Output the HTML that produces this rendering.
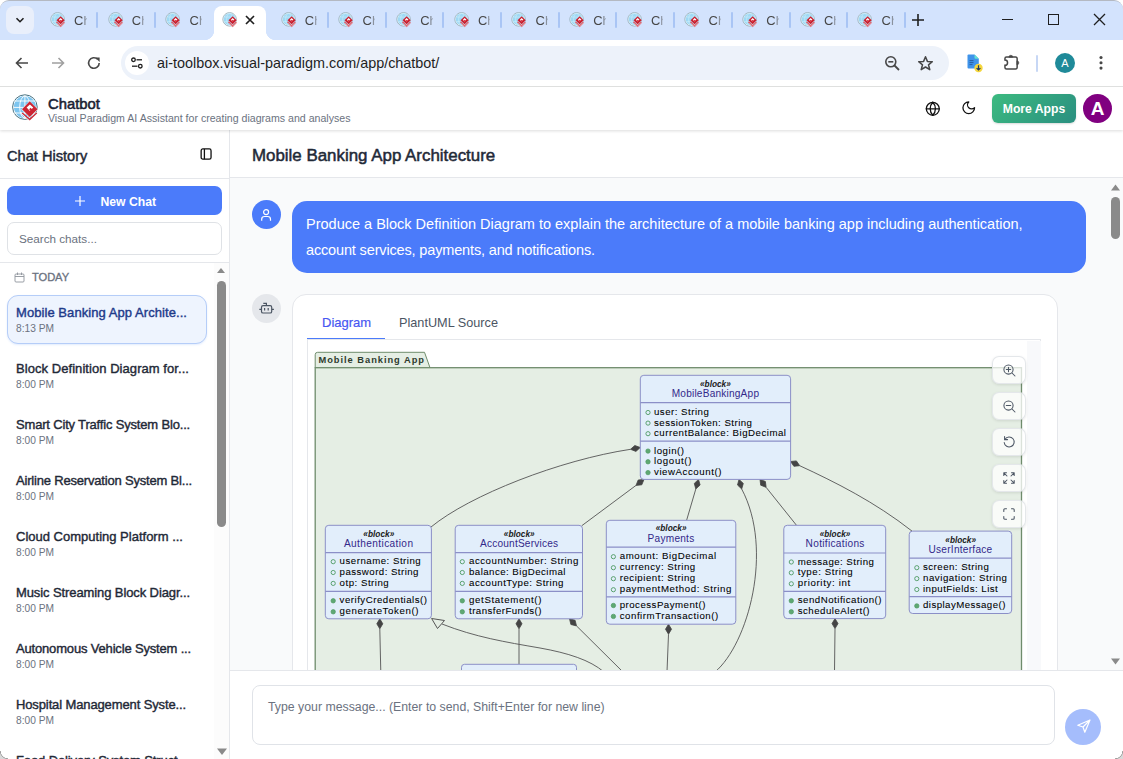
<!DOCTYPE html>
<html><head><meta charset="utf-8">
<style>
*{box-sizing:border-box;margin:0;padding:0}
html,body{width:1123px;height:759px;overflow:hidden;background:#fff;font-family:"Liberation Sans",sans-serif;position:relative}
.a{position:absolute}
#tabs{left:0;top:0;width:1123px;height:41px;background:#d3e3fd;border-top:1px solid #b4b9c2;border-radius:9px 9px 0 0}
.fav{position:absolute;top:12px;width:16px;height:16px}
.ch{position:absolute;top:14px;font-size:13px;line-height:14px;color:#474747;width:12.5px;overflow:hidden;white-space:nowrap;-webkit-mask-image:linear-gradient(90deg,#000 60%,rgba(0,0,0,.3) 100%)}
.sep{position:absolute;top:12px;width:2px;height:16px;background:#a9c5f5;border-radius:1px}
#toolbar{left:0;top:40px;width:1123px;height:47px;background:#fff;border-bottom:1px solid #dfe0df}
#omni{left:121px;top:46px;width:828px;height:34px;border-radius:17px;background:#edf2fa}
#header{left:0;top:87px;width:1123px;height:43px;background:#fff;box-shadow:0 1px 3px rgba(0,0,0,.14);clip-path:inset(0 0 -10px 0);z-index:5}
#sidebar{left:0;top:130px;width:230px;height:629px;background:#fff;border-right:1px solid #e5e7eb}
#main{left:230px;top:130px;width:893px;height:629px;background:#f9fafb}
</style></head>
<body>
<svg width="0" height="0" style="position:absolute">
 <defs>
  <symbol id="vp" viewBox="0 0 26 27">
   <circle cx="12.9" cy="13.1" r="12.3" fill="#fff" stroke="#46707f" stroke-width="1"/>
   <circle cx="12.9" cy="13.1" r="11" fill="#7dc5ef"/>
   <g stroke="#fff" stroke-width="0.9" fill="none">
    <ellipse cx="12.9" cy="13.1" rx="5.2" ry="11"/>
    <line x1="12.9" y1="2" x2="12.9" y2="24.2"/>
    <line x1="2" y1="7" x2="23.8" y2="7"/>
    <line x1="1.9" y1="13.4" x2="23.9" y2="13.4"/>
    <line x1="2" y1="19" x2="23.8" y2="19"/>
   </g>
   <path d="M9.4 15.4 L17.7 7.1 L26 15.4 L17.7 23.3Z" fill="#fff"/>
   <path d="M10 15.2 L17.7 7.3 L25.6 15.2 L17.7 22.9Z" fill="#cc2533"/>
   <path d="M8.6 19.4 L17.7 27 L25.6 19.4 L24.6 18.2 L17.7 24.8 L9.8 18.2Z" fill="#fff"/>
   <path d="M9.6 19.3 L17.7 26.6 L25.3 19.3 L24.3 18.4 L17.7 24.5 L10.6 18.4Z" fill="#cc2533"/>
   <path d="M14.6 13.6 L17.9 10.4 L21.2 13.6 L19.8 15 L18.6 13.8 L17.1 15.3 L18.3 16.5 L17.9 16.9Z" fill="#fff"/>
  </symbol>
 <symbol id="vpf" viewBox="0 0 26 27">
   <circle cx="14" cy="12.4" r="11.4" fill="#fff" stroke="#86a3ae" stroke-width="1.3"/>
   <circle cx="14" cy="12.4" r="10.1" fill="#9fd9f4"/>
   <g stroke="#d6f0fb" stroke-width="0.9" fill="none">
    <ellipse cx="14" cy="12.4" rx="5" ry="10.1"/>
    <line x1="4" y1="8.5" x2="24" y2="8.5"/>
    <line x1="4" y1="16.3" x2="24" y2="16.3"/>
   </g>
   <path d="M11.2 17.2 L19.2 25.6 L26.4 18.2 L24.6 16.4 L19.2 22 L13 15.4Z" fill="#dc5a66"/><path d="M12.6 18.6 L19.2 24.2 L25.2 18.4" fill="none" stroke="#f5c9cd" stroke-width="0.7"/>
   <path d="M12.2 14 L19.2 7 L26 14 L19.2 20.8Z" fill="#cc1f2e"/>
   <path d="M16.3 13.1 L19.2 10.2 L22.1 13.1 L20.7 14.5 L19.3 13.1 L17.9 14.5 L19.1 15.7 L18.6 16.2Z" fill="#fff"/>
  </symbol>
 </defs>
</svg>

<!-- TAB STRIP -->
<div id="tabs" class="a"></div>
<div class="a" style="left:6px;top:6px;width:28px;height:28px;border-radius:8px;background:#e9effb"></div>
<svg class="a" style="left:14px;top:14px" width="12" height="12" viewBox="0 0 12 12"><path d="M2.5 4.2 L6 7.7 L9.5 4.2" fill="none" stroke="#1f1f1f" stroke-width="1.6"/></svg>
<!-- active tab -->
<div class="a" style="left:214px;top:6px;width:52px;height:35px;background:#fff;border-radius:8px 8px 0 0"></div>
<div class="a" style="left:204px;top:30px;width:10px;height:11px;background:radial-gradient(circle at 0 0,#d3e3fd 10px,#fff 10.6px)"></div>
<div class="a" style="left:266px;top:30px;width:10px;height:11px;background:radial-gradient(circle at 100% 0,#d3e3fd 10px,#fff 10.6px)"></div>
<svg class="fav" style="left:48.9px"><use href="#vpf"/></svg>
<div class="ch" style="left:74.1px">Ch</div>
<svg class="fav" style="left:106.6px"><use href="#vpf"/></svg>
<div class="ch" style="left:131.8px">Ch</div>
<svg class="fav" style="left:164.3px"><use href="#vpf"/></svg>
<div class="ch" style="left:189.5px">Ch</div>
<svg class="fav" style="left:220.6px"><use href="#vpf"/></svg>
<svg class="fav" style="left:279.6px"><use href="#vpf"/></svg>
<div class="ch" style="left:304.8px">Ch</div>
<svg class="fav" style="left:337.3px"><use href="#vpf"/></svg>
<div class="ch" style="left:362.5px">Ch</div>
<svg class="fav" style="left:395.0px"><use href="#vpf"/></svg>
<div class="ch" style="left:420.2px">Ch</div>
<svg class="fav" style="left:452.7px"><use href="#vpf"/></svg>
<div class="ch" style="left:477.9px">Ch</div>
<svg class="fav" style="left:510.3px"><use href="#vpf"/></svg>
<div class="ch" style="left:535.5px">Ch</div>
<svg class="fav" style="left:568.0px"><use href="#vpf"/></svg>
<div class="ch" style="left:593.2px">Ch</div>
<svg class="fav" style="left:625.7px"><use href="#vpf"/></svg>
<div class="ch" style="left:650.9px">Ch</div>
<svg class="fav" style="left:683.4px"><use href="#vpf"/></svg>
<div class="ch" style="left:708.6px">Ch</div>
<svg class="fav" style="left:741.1px"><use href="#vpf"/></svg>
<div class="ch" style="left:766.3px">Ch</div>
<svg class="fav" style="left:798.7px"><use href="#vpf"/></svg>
<div class="ch" style="left:823.9px">Ch</div>
<svg class="fav" style="left:856.4px"><use href="#vpf"/></svg>
<div class="ch" style="left:881.6px">Ch</div>
<div class="sep" style="left:96.3px"></div>
<div class="sep" style="left:154.0px"></div>
<div class="sep" style="left:327.0px"></div>
<div class="sep" style="left:384.7px"></div>
<div class="sep" style="left:442.4px"></div>
<div class="sep" style="left:500.1px"></div>
<div class="sep" style="left:557.7px"></div>
<div class="sep" style="left:615.4px"></div>
<div class="sep" style="left:673.1px"></div>
<div class="sep" style="left:730.8px"></div>
<div class="sep" style="left:788.5px"></div>
<div class="sep" style="left:846.1px"></div>
<div class="sep" style="left:903.8px"></div>
<svg class="a" style="left:245px;top:15px" width="10" height="10" viewBox="0 0 10 10"><path d="M1 1 L9 9 M9 1 L1 9" stroke="#1f1f1f" stroke-width="1.7"/></svg>
<!-- new tab + -->
<svg class="a" style="left:911px;top:13px" width="14" height="14" viewBox="0 0 14 14"><path d="M7 1 V13 M1 7 H13" stroke="#1f1f1f" stroke-width="1.6"/></svg>
<!-- window controls -->
<div class="a" style="left:1002px;top:19px;width:11px;height:1.3px;background:#1f1f1f"></div>
<div class="a" style="left:1048px;top:14px;width:11px;height:11px;border:1.3px solid #1f1f1f"></div>
<svg class="a" style="left:1093px;top:13px" width="13" height="13" viewBox="0 0 13 13"><path d="M1 1 L12 12 M12 1 L1 12" stroke="#1f1f1f" stroke-width="1.3"/></svg>

<!-- TOOLBAR -->
<div id="toolbar" class="a"></div>
<svg class="a" style="left:14px;top:55px" width="16" height="16" viewBox="0 0 16 16"><path d="M14 8 H2.5 M7.5 3 L2.5 8 L7.5 13" fill="none" stroke="#474747" stroke-width="1.6"/></svg>
<svg class="a" style="left:50px;top:55px" width="16" height="16" viewBox="0 0 16 16"><path d="M2 8 H13.5 M8.5 3 L13.5 8 L8.5 13" fill="none" stroke="#a0a0a0" stroke-width="1.6"/></svg>
<svg class="a" style="left:86px;top:55px" width="16" height="16" viewBox="0 0 16 16"><path d="M13.2 8 A5.3 5.3 0 1 1 11.6 4.2" fill="none" stroke="#474747" stroke-width="1.6"/><path d="M9.2 2.6 L13.6 2.6 L13.6 7 Z" fill="#474747"/></svg>
<div id="omni" class="a"></div>
<div class="a" style="left:125px;top:51px;width:24px;height:24px;border-radius:12px;background:#fff"></div>
<svg class="a" style="left:130px;top:56px" width="14" height="14" viewBox="0 0 14 14"><circle cx="3.5" cy="3.8" r="1.8" fill="none" stroke="#1f1f1f" stroke-width="1.3"/><path d="M6.5 3.8 H12" stroke="#1f1f1f" stroke-width="1.3"/><circle cx="10.3" cy="10.2" r="1.8" fill="none" stroke="#1f1f1f" stroke-width="1.3"/><path d="M2 10.2 H7.5" stroke="#1f1f1f" stroke-width="1.3"/></svg>
<div class="a" style="left:157px;top:55px;font-size:14.4px;line-height:16px;color:#1f1f1f;white-space:nowrap">ai-toolbox.visual-paradigm.com/app/chatbot/</div>
<svg class="a" style="left:884px;top:55px" width="17" height="17" viewBox="0 0 17 17"><circle cx="6.8" cy="6.8" r="5" fill="none" stroke="#474747" stroke-width="1.6"/><path d="M4.3 6.8 H9.3" stroke="#474747" stroke-width="1.6"/><path d="M10.5 10.5 L15 15" stroke="#474747" stroke-width="1.8"/></svg>
<svg class="a" style="left:917px;top:55px" width="17" height="17" viewBox="0 0 17 17"><path d="M8.5 1.8 L10.4 6.4 L15.3 6.7 L11.5 9.8 L12.8 14.7 L8.5 12 L4.2 14.7 L5.5 9.8 L1.7 6.7 L6.6 6.4Z" fill="none" stroke="#474747" stroke-width="1.5" stroke-linejoin="round"/></svg>
<!-- extension doc icon -->
<svg class="a" style="left:965px;top:54px" width="19" height="19" viewBox="0 0 19 19"><path d="M2.5 1.5 Q2.5 0.5 3.5 0.5 H9.5 L13.8 4.8 V13.5 Q13.8 14.5 12.8 14.5 H3.5 Q2.5 14.5 2.5 13.5Z" fill="#3f93ea"/><path d="M9.5 0.5 L13.8 4.8 H10.5 Q9.5 4.8 9.5 3.8Z" fill="#63e3cf"/><path d="M4.5 6.6 H8.5 M4.5 8.6 H8.5 M4.5 10.6 H7.5" stroke="#24508f" stroke-width="0.8"/><circle cx="13.5" cy="14" r="4.2" fill="#f5d63d"/><path d="M13.5 11.3 V16 M11.6 14.1 L13.5 16 L15.4 14.1" fill="none" stroke="#1e3560" stroke-width="1.2"/></svg>
<!-- puzzle -->
<svg class="a" style="left:1002px;top:54px" width="20" height="18" viewBox="0 0 20 18"><path d="M4.5 2.95 H13.6 Q15.15 2.95 15.15 4.5 V13.4 Q15.15 14.95 13.6 14.95 H4.5 Q2.95 14.95 2.95 13.4 V11.3 A2.6 2.6 0 0 0 2.95 6.1 V4.5 Q2.95 2.95 4.5 2.95Z" fill="none" stroke="#474747" stroke-width="1.5"/><path d="M6.9 3.2 A1.95 1.95 0 0 1 10.8 3.2Z M14.9 6.9 A1.95 1.95 0 0 1 14.9 10.8Z" fill="#474747" stroke="#474747" stroke-width="0.6"/></svg>
<div class="a" style="left:1036px;top:55px;width:2px;height:17px;background:#c7d7f5;border-radius:1px"></div>
<div class="a" style="left:1055px;top:53px;width:20px;height:20px;border-radius:10px;background:#1f8a99;color:#fff;font-size:11px;line-height:20px;text-align:center">A</div>
<svg class="a" style="left:1093px;top:54px" width="16" height="18" viewBox="0 0 16 18"><circle cx="8" cy="3.5" r="1.55" fill="#474747"/><circle cx="8" cy="8.8" r="1.55" fill="#474747"/><circle cx="8" cy="14.1" r="1.55" fill="#474747"/></svg>

<!-- APP HEADER -->
<div id="header" class="a"></div>
<svg class="a" style="left:12px;top:94px;z-index:6" width="26" height="27"><use href="#vp"/></svg>
<div class="a" style="left:48px;top:95.5px;font-size:14.8px;line-height:16px;color:#1a2232;-webkit-text-stroke:0.55px #1a2232;z-index:6">Chatbot</div>
<div class="a" style="left:48px;top:112px;font-size:10.6px;line-height:12px;color:#6b7280;z-index:6;white-space:nowrap">Visual Paradigm AI Assistant for creating diagrams and analyses</div>
<svg class="a" style="left:925px;top:100.8px;z-index:6" width="15.6" height="15.6" viewBox="0 0 24 24"><g fill="none" stroke="#111" stroke-width="2" stroke-linecap="round" stroke-linejoin="round"><circle cx="12" cy="12" r="10"/><path d="M12 2a14.5 14.5 0 0 0 0 20 14.5 14.5 0 0 0 0-20"/><path d="M2 12h20"/></g></svg>
<svg class="a" style="left:960.5px;top:100.4px;z-index:6" width="15.5" height="15.5" viewBox="0 0 24 24"><path d="M12 3a6 6 0 0 0 9 9 9 9 0 1 1-9-9Z" fill="none" stroke="#111" stroke-width="2" stroke-linecap="round" stroke-linejoin="round"/></svg>
<div class="a" style="left:992px;top:94px;width:84px;height:29px;border-radius:6px;background:linear-gradient(135deg,#3cba80,#2a8f80);color:#fff;font-weight:bold;font-size:12.2px;line-height:30px;text-align:center;z-index:6;box-shadow:0 1px 2px rgba(0,0,0,.15)">More Apps</div>
<div class="a" style="left:1083px;top:94px;width:29px;height:29px;border-radius:50%;background:#800080;color:#fff;font-weight:bold;font-size:19px;line-height:29px;text-align:center;z-index:6">A</div>

<div id="sidebar" class="a"></div>
<div class="a" style="left:0;top:178px;width:230px;height:1px;background:#e5e7eb"></div>
<div class="a" style="left:7px;top:147.5px;font-size:14.6px;line-height:16px;color:#1f2937;-webkit-text-stroke:0.45px #1f2937">Chat History</div>
<svg class="a" style="left:199px;top:147px" width="14" height="14" viewBox="0 0 14 14"><rect x="2.15" y="1.95" width="9.9" height="10.2" rx="1.7" fill="none" stroke="#111" stroke-width="1.3"/><path d="M5.4 1.95 V12.15" stroke="#111" stroke-width="1.3"/></svg>
<div class="a" style="left:7px;top:186px;width:215px;height:29px;border-radius:7px;background:#4b7bfa"></div>
<svg class="a" style="left:75px;top:195.5px" width="10" height="10" viewBox="0 0 10 10"><path d="M5 0 V10 M0 5 H10" stroke="#fff" stroke-width="1.2"/></svg>
<div class="a" style="left:100.5px;top:195px;font-size:12.2px;line-height:14px;font-weight:bold;color:#fff">New Chat</div>
<div class="a" style="left:7px;top:222px;width:215px;height:33px;border-radius:7px;background:#fff;border:1px solid #dfe2e6"></div>
<div class="a" style="left:19px;top:232px;font-size:11.7px;line-height:14px;color:#6b7280">Search chats...</div>
<div class="a" style="left:0;top:262px;width:229px;height:1px;background:#e5e7eb"></div>
<svg class="a" style="left:14px;top:271.5px" width="11" height="11" viewBox="0 0 11 11"><rect x="1" y="2" width="9" height="8" rx="1" fill="none" stroke="#8e949c" stroke-width="0.9"/><path d="M1 4.5 H10 M3.5 0.5 V3 M7.5 0.5 V3" stroke="#8e949c" stroke-width="0.9"/></svg>
<div class="a" style="left:32px;top:270.8px;font-size:11.2px;line-height:12px;color:#6b7280;-webkit-text-stroke:0.3px #6b7280;letter-spacing:-0.1px">TODAY</div>
<div class="a" style="left:7px;top:295px;width:200px;height:49px;border-radius:11px;background:#eef4fe;border:1px solid #b5cdf8;box-shadow:0 1px 2px rgba(59,130,246,.15)"></div>
<div class="a" style="left:16px;top:306px;font-size:13px;line-height:14px;color:#1e3a8a;-webkit-text-stroke:0.4px #1e3a8a;white-space:nowrap;letter-spacing:0.066px">Mobile Banking App Archite...</div>
<div class="a" style="left:16px;top:323px;font-size:10.2px;line-height:12px;color:#6b7280">8:13 PM</div>
<div class="a" style="left:16px;top:362px;font-size:13px;line-height:14px;color:#1f2937;-webkit-text-stroke:0.4px #1f2937;white-space:nowrap;letter-spacing:0.057px">Block Definition Diagram for...</div>
<div class="a" style="left:16px;top:379px;font-size:10.2px;line-height:12px;color:#6b7280">8:00 PM</div>
<div class="a" style="left:16px;top:418px;font-size:13px;line-height:14px;color:#1f2937;-webkit-text-stroke:0.4px #1f2937;white-space:nowrap;letter-spacing:-0.176px">Smart City Traffic System Blo...</div>
<div class="a" style="left:16px;top:435px;font-size:10.2px;line-height:12px;color:#6b7280">8:00 PM</div>
<div class="a" style="left:16px;top:474px;font-size:13px;line-height:14px;color:#1f2937;-webkit-text-stroke:0.4px #1f2937;white-space:nowrap;letter-spacing:-0.189px">Airline Reservation System Bl...</div>
<div class="a" style="left:16px;top:491px;font-size:10.2px;line-height:12px;color:#6b7280">8:00 PM</div>
<div class="a" style="left:16px;top:530px;font-size:13px;line-height:14px;color:#1f2937;-webkit-text-stroke:0.4px #1f2937;white-space:nowrap;letter-spacing:0.003px">Cloud Computing Platform ...</div>
<div class="a" style="left:16px;top:547px;font-size:10.2px;line-height:12px;color:#6b7280">8:00 PM</div>
<div class="a" style="left:16px;top:586px;font-size:13px;line-height:14px;color:#1f2937;-webkit-text-stroke:0.4px #1f2937;white-space:nowrap;letter-spacing:-0.100px">Music Streaming Block Diagr...</div>
<div class="a" style="left:16px;top:603px;font-size:10.2px;line-height:12px;color:#6b7280">8:00 PM</div>
<div class="a" style="left:16px;top:642px;font-size:13px;line-height:14px;color:#1f2937;-webkit-text-stroke:0.4px #1f2937;white-space:nowrap;letter-spacing:-0.170px">Autonomous Vehicle System ...</div>
<div class="a" style="left:16px;top:659px;font-size:10.2px;line-height:12px;color:#6b7280">8:00 PM</div>
<div class="a" style="left:16px;top:698px;font-size:13px;line-height:14px;color:#1f2937;-webkit-text-stroke:0.4px #1f2937;white-space:nowrap;letter-spacing:-0.122px">Hospital Management Syste...</div>
<div class="a" style="left:16px;top:715px;font-size:10.2px;line-height:12px;color:#6b7280">8:00 PM</div>
<div class="a" style="left:16px;top:754px;font-size:13px;line-height:14px;color:#1f2937;-webkit-text-stroke:0.4px #1f2937;white-space:nowrap;letter-spacing:-0.118px">Food Delivery System Struct...</div>
<div class="a" style="left:16px;top:771px;font-size:10.2px;line-height:12px;color:#6b7280">8:00 PM</div>
<!-- sidebar scrollbar -->
<div class="a" style="left:214px;top:263px;width:15px;height:496px;background:#fcfcfc"></div>
<svg class="a" style="left:216px;top:266px" width="10" height="8" viewBox="0 0 10 8"><path d="M1 7 L5 2 L9 7Z" fill="#8a8a8a"/></svg>
<div class="a" style="left:217px;top:281px;width:9px;height:246px;border-radius:4.5px;background:#8a8a8a"></div>
<svg class="a" style="left:216px;top:747px" width="12" height="9" viewBox="0 0 12 9"><path d="M1 1.5 L6 8 L11 1.5Z" fill="#8a8a8a"/></svg>
<div id="main" class="a"></div>
<div class="a" style="left:230px;top:130px;width:893px;height:48px;background:#fff;border-bottom:1px solid #e5e7eb"></div>
<div class="a" style="left:252px;top:147px;font-size:16.9px;line-height:18px;color:#1f2937;-webkit-text-stroke:0.5px #1f2937;white-space:nowrap">Mobile Banking App Architecture</div>
<!-- user message -->
<div class="a" style="left:252px;top:200px;width:29px;height:29px;border-radius:50%;background:#4b7bfa"></div>
<svg class="a" style="left:259px;top:208px" width="14" height="14" viewBox="0 0 14 14"><circle cx="7.1" cy="4.1" r="2.5" fill="none" stroke="#fff" stroke-width="1.2"/><path d="M2.7 12.8 V11.2 Q2.7 8.5 5.5 8.5 H8.7 Q11.5 8.5 11.5 11.2 V12.8" fill="none" stroke="#fff" stroke-width="1.2"/></svg>
<div class="a" style="left:292px;top:201px;width:794px;height:72px;border-radius:15px;background:#4b7bfa"></div>
<div class="a" style="left:306px;top:211px;font-size:14.5px;line-height:26px;color:#fff;white-space:nowrap">Produce a Block Definition Diagram to explain the architecture of a mobile banking app including authentication,<br><span style="letter-spacing:-0.15px">account services, payments, and notifications.</span></div>
<!-- bot -->
<div class="a" style="left:252px;top:294px;width:29px;height:29px;border-radius:50%;background:#e5e7eb"></div>
<svg class="a" style="left:258px;top:301px" width="16" height="15" viewBox="258 301 16 15"><rect x="261.5" y="305.6" width="10.2" height="7.4" rx="1.6" fill="none" stroke="#4b5563" stroke-width="1.2"/><path d="M259.3 309.4 H261.2 M272 309.4 H273.9 M266.4 305.4 V303.3 H263.3 M264.6 308 V310.6 M268.2 308 V310.6" fill="none" stroke="#4b5563" stroke-width="1.2"/></svg>
<div class="a" style="left:292px;top:294px;width:766px;height:500px;border-radius:14px;background:#fff;border:1px solid #e5e7eb"></div>
<div class="a" style="left:322px;top:315px;font-size:13px;line-height:15px;color:#4858f2;-webkit-text-stroke:0.2px #4858f2">Diagram</div>
<div class="a" style="left:399px;top:316px;font-size:12.7px;line-height:15px;color:#4b5563">PlantUML Source</div>
<div class="a" style="left:307px;top:339px;width:734px;height:2px;background:#e5e7eb"></div>
<div class="a" style="left:307px;top:337.6px;width:78px;height:1.6px;background:#4b7bfa"></div>
<div class="a" style="left:307px;top:340px;width:734px;height:400px;background:#fff;border-left:1px solid #e5e7eb;border-right:1px solid #e5e7eb"></div>
<div class="a" style="left:1027px;top:341px;width:14px;height:400px;background:#f8f9fb"></div>
<!--DIAGRAM--><svg class="a" style="left:308px;top:341px" width="719" height="329" viewBox="308 341 719 329" font-family="Liberation Sans, sans-serif">
<path d="M315.2 367.7 V354.7 Q315.2 352.3 317.6 352.3 H424.5 L430 367.7" fill="#e5eee4" stroke="#6f8c6c" stroke-width="1"/>
<rect x="315.2" y="367.7" width="706.3" height="340" fill="#e5eee4" stroke="#6f8c6c" stroke-width="1.3"/>
<text x="318.5" y="362.9" font-size="9.3" font-weight="bold" fill="#2e3b2e" textLength="105.5" lengthAdjust="spacing">Mobile Banking App</text>
<path d="M640.3 447.5 L634.8 445.5 L630.5 449.3 L635.9 451.4Z" fill="#444" stroke="#444" stroke-width="0.8"/>
<path d="M630.5 449.3 C560 460, 470 495, 431 527" stroke="#5c5c5c" stroke-width="0.95" fill="none"/>
<path d="M644 479.4 L638.2 480.0 L636.0 485.4 L641.8 484.8Z" fill="#444" stroke="#444" stroke-width="0.8"/>
<path d="M636.0 485.4 L581.8 525.7" stroke="#5c5c5c" stroke-width="0.95" fill="none"/>
<path d="M698.5 479.4 L694.3 483.4 L695.8 489.0 L700.1 485.0Z" fill="#444" stroke="#444" stroke-width="0.8"/>
<path d="M695.8 489.0 L686.6 520.3" stroke="#5c5c5c" stroke-width="0.95" fill="none"/>
<path d="M739 479.4 L737.5 485.0 L741.7 489.0 L743.3 483.4Z" fill="#444" stroke="#444" stroke-width="0.8"/>
<path d="M741.7 489.0 C774 550, 748 644, 715 672" stroke="#5c5c5c" stroke-width="0.95" fill="none"/>
<path d="M760 479.4 L760.7 485.2 L766.1 487.3 L765.4 481.5Z" fill="#444" stroke="#444" stroke-width="0.8"/>
<path d="M766.1 487.3 L796.5 525.3" stroke="#5c5c5c" stroke-width="0.95" fill="none"/>
<path d="M790.6 461.5 L793.9 466.3 L799.7 465.7 L796.4 460.9Z" fill="#444" stroke="#444" stroke-width="0.8"/>
<path d="M799.7 465.7 C835 482, 875 502, 912 531.1" stroke="#5c5c5c" stroke-width="0.95" fill="none"/>
<path d="M379.8 618.8 L376.8 623.8 L379.8 628.8 L382.8 623.8Z" fill="#444" stroke="#444" stroke-width="0.8"/>
<path d="M379.8 628.8 L380.8 672" stroke="#5c5c5c" stroke-width="0.95" fill="none"/>
<path d="M442 624 C475 637, 505 642, 540 648 C568 653, 590 660, 604 672" stroke="#5c5c5c" stroke-width="0.95" fill="none"/>
<path d="M431.6 618.5 L437.5 628.5 L444.5 620.5Z" fill="#e5eee4" stroke="#555" stroke-width="1"/>
<path d="M519 618.8 L516.0 623.8 L519.0 628.8 L522.0 623.8Z" fill="#444" stroke="#444" stroke-width="0.8"/>
<path d="M519.0 628.8 L519 664.3" stroke="#5c5c5c" stroke-width="0.95" fill="none"/>
<path d="M569.5 618.8 L570.9 624.5 L576.5 625.9 L575.1 620.3Z" fill="#444" stroke="#444" stroke-width="0.8"/>
<path d="M576.5 625.9 L623 672" stroke="#5c5c5c" stroke-width="0.95" fill="none"/>
<path d="M668.5 624.2 L665.5 629.2 L668.5 634.2 L671.5 629.2Z" fill="#444" stroke="#444" stroke-width="0.8"/>
<path d="M668.5 634.2 L667 672" stroke="#5c5c5c" stroke-width="0.95" fill="none"/>
<path d="M835 618.6 L832.0 623.6 L835.0 628.6 L838.0 623.6Z" fill="#444" stroke="#444" stroke-width="0.8"/>
<path d="M835.0 628.6 L834.5 672" stroke="#5c5c5c" stroke-width="0.95" fill="none"/>
<rect x="461.5" y="664.3" width="115" height="30" rx="3" fill="#e2eefb" stroke="#8b8fc7" stroke-width="1"/>
<rect x="640.3" y="375.3" width="150.3" height="104.1" rx="3.5" fill="#e2eefb" stroke="#8b8fc7" stroke-width="1"/>
<path d="M640.3 402.6 H790.6 M640.3 441.2 H790.6" stroke="#8b8fc7" stroke-width="1.2"/>
<text x="700" y="387.4" font-size="8.4" font-style="italic" font-weight="bold" fill="#1a1a1a" textLength="30.8" lengthAdjust="spacingAndGlyphs">«block»</text>
<text x="671.7" y="397.4" font-size="10.1" fill="#33288a" textLength="87.3" lengthAdjust="spacing">MobileBankingApp</text>
<circle cx="648" cy="412.5" r="2.1" fill="none" stroke="#4d9a62" stroke-width="0.9"/>
<text x="654" y="415.0" font-size="9.7" fill="#000" stroke="#000" stroke-width="0.07" textLength="54.8" lengthAdjust="spacing">user: String</text>
<circle cx="648" cy="423.1" r="2.1" fill="none" stroke="#4d9a62" stroke-width="0.9"/>
<text x="654" y="425.6" font-size="9.7" fill="#000" stroke="#000" stroke-width="0.07" textLength="98" lengthAdjust="spacing">sessionToken: String</text>
<circle cx="648" cy="433.7" r="2.1" fill="none" stroke="#4d9a62" stroke-width="0.9"/>
<text x="654" y="436.2" font-size="9.7" fill="#000" stroke="#000" stroke-width="0.07" textLength="132" lengthAdjust="spacing">currentBalance: BigDecimal</text>
<circle cx="648" cy="451.1" r="2.2" fill="#5fa873" stroke="#4d9a62" stroke-width="0.7"/>
<text x="654" y="453.6" font-size="9.7" fill="#000" stroke="#000" stroke-width="0.07" textLength="30" lengthAdjust="spacing">login()</text>
<circle cx="648" cy="461.8" r="2.2" fill="#5fa873" stroke="#4d9a62" stroke-width="0.7"/>
<text x="654" y="464.3" font-size="9.7" fill="#000" stroke="#000" stroke-width="0.07" textLength="37.4" lengthAdjust="spacing">logout()</text>
<circle cx="648" cy="472.6" r="2.2" fill="#5fa873" stroke="#4d9a62" stroke-width="0.7"/>
<text x="654" y="475.1" font-size="9.7" fill="#000" stroke="#000" stroke-width="0.07" textLength="67.4" lengthAdjust="spacing">viewAccount()</text>
<rect x="325.3" y="525.3" width="106.1" height="93.5" rx="3.5" fill="#e2eefb" stroke="#8b8fc7" stroke-width="1"/>
<path d="M325.3 552.7 H431.4 M325.3 591.4 H431.4" stroke="#8b8fc7" stroke-width="1.2"/>
<text x="363.3" y="537" font-size="8.4" font-style="italic" font-weight="bold" fill="#1a1a1a" textLength="31.0" lengthAdjust="spacingAndGlyphs">«block»</text>
<text x="344" y="547.1" font-size="10.1" fill="#33288a" textLength="69" lengthAdjust="spacing">Authentication</text>
<circle cx="333.2" cy="561.7" r="2.1" fill="none" stroke="#4d9a62" stroke-width="0.9"/>
<text x="339.6" y="564.2" font-size="9.7" fill="#000" stroke="#000" stroke-width="0.07" textLength="81.1" lengthAdjust="spacing">username: String</text>
<circle cx="333.2" cy="572.5" r="2.1" fill="none" stroke="#4d9a62" stroke-width="0.9"/>
<text x="339.6" y="575.0" font-size="9.7" fill="#000" stroke="#000" stroke-width="0.07" textLength="78.9" lengthAdjust="spacing">password: String</text>
<circle cx="333.2" cy="583.4" r="2.1" fill="none" stroke="#4d9a62" stroke-width="0.9"/>
<text x="339.6" y="585.9" font-size="9.7" fill="#000" stroke="#000" stroke-width="0.07" textLength="49.1" lengthAdjust="spacing">otp: String</text>
<circle cx="333.2" cy="600.8" r="2.2" fill="#5fa873" stroke="#4d9a62" stroke-width="0.7"/>
<text x="339.6" y="603.3" font-size="9.7" fill="#000" stroke="#000" stroke-width="0.07" textLength="87.4" lengthAdjust="spacing">verifyCredentials()</text>
<circle cx="333.2" cy="611.8" r="2.2" fill="#5fa873" stroke="#4d9a62" stroke-width="0.7"/>
<text x="339.6" y="614.3" font-size="9.7" fill="#000" stroke="#000" stroke-width="0.07" textLength="78.9" lengthAdjust="spacing">generateToken()</text>
<rect x="455.2" y="525.3" width="127.3" height="93.5" rx="3.5" fill="#e2eefb" stroke="#8b8fc7" stroke-width="1"/>
<path d="M455.2 552.7 H582.5 M455.2 591.4 H582.5" stroke="#8b8fc7" stroke-width="1.2"/>
<text x="503.8" y="537" font-size="8.4" font-style="italic" font-weight="bold" fill="#1a1a1a" textLength="30.8" lengthAdjust="spacingAndGlyphs">«block»</text>
<text x="480" y="547.1" font-size="10.1" fill="#33288a" textLength="78" lengthAdjust="spacing">AccountServices</text>
<circle cx="462.3" cy="561.7" r="2.1" fill="none" stroke="#4d9a62" stroke-width="0.9"/>
<text x="469" y="564.2" font-size="9.7" fill="#000" stroke="#000" stroke-width="0.07" textLength="109.4" lengthAdjust="spacing">accountNumber: String</text>
<circle cx="462.3" cy="572.5" r="2.1" fill="none" stroke="#4d9a62" stroke-width="0.9"/>
<text x="469" y="575.0" font-size="9.7" fill="#000" stroke="#000" stroke-width="0.07" textLength="96.4" lengthAdjust="spacing">balance: BigDecimal</text>
<circle cx="462.3" cy="583.4" r="2.1" fill="none" stroke="#4d9a62" stroke-width="0.9"/>
<text x="469" y="585.9" font-size="9.7" fill="#000" stroke="#000" stroke-width="0.07" textLength="94.5" lengthAdjust="spacing">accountType: String</text>
<circle cx="462.3" cy="600.8" r="2.2" fill="#5fa873" stroke="#4d9a62" stroke-width="0.7"/>
<text x="469" y="603.3" font-size="9.7" fill="#000" stroke="#000" stroke-width="0.07" textLength="72.4" lengthAdjust="spacing">getStatement()</text>
<circle cx="462.3" cy="611.8" r="2.2" fill="#5fa873" stroke="#4d9a62" stroke-width="0.7"/>
<text x="469" y="614.3" font-size="9.7" fill="#000" stroke="#000" stroke-width="0.07" textLength="72.4" lengthAdjust="spacing">transferFunds()</text>
<rect x="606.3" y="520.3" width="129.5" height="103.9" rx="3.5" fill="#e2eefb" stroke="#8b8fc7" stroke-width="1"/>
<path d="M606.3 547.2 H735.8 M606.3 596.8 H735.8" stroke="#8b8fc7" stroke-width="1.2"/>
<text x="655.7" y="531" font-size="8.4" font-style="italic" font-weight="bold" fill="#1a1a1a" textLength="30.8" lengthAdjust="spacingAndGlyphs">«block»</text>
<text x="647.6" y="542.2" font-size="10.1" fill="#33288a" textLength="46.6" lengthAdjust="spacing">Payments</text>
<circle cx="613.4" cy="556.7" r="2.1" fill="none" stroke="#4d9a62" stroke-width="0.9"/>
<text x="619.7" y="559.2" font-size="9.7" fill="#000" stroke="#000" stroke-width="0.07" textLength="96.4" lengthAdjust="spacing">amount: BigDecimal</text>
<circle cx="613.4" cy="567.7" r="2.1" fill="none" stroke="#4d9a62" stroke-width="0.9"/>
<text x="619.7" y="570.2" font-size="9.7" fill="#000" stroke="#000" stroke-width="0.07" textLength="75.5" lengthAdjust="spacing">currency: String</text>
<circle cx="613.4" cy="578.7" r="2.1" fill="none" stroke="#4d9a62" stroke-width="0.9"/>
<text x="619.7" y="581.2" font-size="9.7" fill="#000" stroke="#000" stroke-width="0.07" textLength="75.5" lengthAdjust="spacing">recipient: String</text>
<circle cx="613.4" cy="589.7" r="2.1" fill="none" stroke="#4d9a62" stroke-width="0.9"/>
<text x="619.7" y="592.2" font-size="9.7" fill="#000" stroke="#000" stroke-width="0.07" textLength="111.7" lengthAdjust="spacing">paymentMethod: String</text>
<circle cx="613.4" cy="605.5" r="2.2" fill="#5fa873" stroke="#4d9a62" stroke-width="0.7"/>
<text x="619.7" y="608.0" font-size="9.7" fill="#000" stroke="#000" stroke-width="0.07" textLength="85.7" lengthAdjust="spacing">processPayment()</text>
<circle cx="613.4" cy="616.4" r="2.2" fill="#5fa873" stroke="#4d9a62" stroke-width="0.7"/>
<text x="619.7" y="618.9" font-size="9.7" fill="#000" stroke="#000" stroke-width="0.07" textLength="98.5" lengthAdjust="spacing">confirmTransaction()</text>
<rect x="783.8" y="525.3" width="101.9" height="93.3" rx="3.5" fill="#e2eefb" stroke="#8b8fc7" stroke-width="1"/>
<path d="M783.8 553 H885.7 M783.8 591.4 H885.7" stroke="#8b8fc7" stroke-width="1.2"/>
<text x="819.8" y="537.3" font-size="8.4" font-style="italic" font-weight="bold" fill="#1a1a1a" textLength="30.5" lengthAdjust="spacingAndGlyphs">«block»</text>
<text x="805.6" y="547.3" font-size="10.1" fill="#33288a" textLength="58.8" lengthAdjust="spacing">Notifications</text>
<circle cx="791.3" cy="562.0" r="2.1" fill="none" stroke="#4d9a62" stroke-width="0.9"/>
<text x="797.7" y="564.5" font-size="9.7" fill="#000" stroke="#000" stroke-width="0.07" textLength="76.2" lengthAdjust="spacing">message: String</text>
<circle cx="791.3" cy="572.8" r="2.1" fill="none" stroke="#4d9a62" stroke-width="0.9"/>
<text x="797.7" y="575.3" font-size="9.7" fill="#000" stroke="#000" stroke-width="0.07" textLength="55.0" lengthAdjust="spacing">type: String</text>
<circle cx="791.3" cy="583.8" r="2.1" fill="none" stroke="#4d9a62" stroke-width="0.9"/>
<text x="797.7" y="586.3" font-size="9.7" fill="#000" stroke="#000" stroke-width="0.07" textLength="52.6" lengthAdjust="spacing">priority: int</text>
<circle cx="791.3" cy="600.8" r="2.2" fill="#5fa873" stroke="#4d9a62" stroke-width="0.7"/>
<text x="797.7" y="603.3" font-size="9.7" fill="#000" stroke="#000" stroke-width="0.07" textLength="83.8" lengthAdjust="spacing">sendNotification()</text>
<circle cx="791.3" cy="611.8" r="2.2" fill="#5fa873" stroke="#4d9a62" stroke-width="0.7"/>
<text x="797.7" y="614.3" font-size="9.7" fill="#000" stroke="#000" stroke-width="0.07" textLength="71.9" lengthAdjust="spacing">scheduleAlert()</text>
<rect x="909.2" y="531.1" width="102.5" height="82.4" rx="3.5" fill="#e2eefb" stroke="#8b8fc7" stroke-width="1"/>
<path d="M909.2 558.2 H1011.7 M909.2 596.7 H1011.7" stroke="#8b8fc7" stroke-width="1.2"/>
<text x="945.3" y="542.5" font-size="8.4" font-style="italic" font-weight="bold" fill="#1a1a1a" textLength="30.7" lengthAdjust="spacingAndGlyphs">«block»</text>
<text x="928.5" y="552.9" font-size="10.1" fill="#33288a" textLength="63.7" lengthAdjust="spacing">UserInterface</text>
<circle cx="916.8" cy="567.7" r="2.1" fill="none" stroke="#4d9a62" stroke-width="0.9"/>
<text x="923" y="570.2" font-size="9.7" fill="#000" stroke="#000" stroke-width="0.07" textLength="65.8" lengthAdjust="spacing">screen: String</text>
<circle cx="916.8" cy="578.6" r="2.1" fill="none" stroke="#4d9a62" stroke-width="0.9"/>
<text x="923" y="581.1" font-size="9.7" fill="#000" stroke="#000" stroke-width="0.07" textLength="84" lengthAdjust="spacing">navigation: String</text>
<circle cx="916.8" cy="589.5" r="2.1" fill="none" stroke="#4d9a62" stroke-width="0.9"/>
<text x="923" y="592.0" font-size="9.7" fill="#000" stroke="#000" stroke-width="0.07" textLength="74.8" lengthAdjust="spacing">inputFields: List</text>
<circle cx="916.8" cy="605.9" r="2.2" fill="#5fa873" stroke="#4d9a62" stroke-width="0.7"/>
<text x="923" y="608.4" font-size="9.7" fill="#000" stroke="#000" stroke-width="0.07" textLength="82.4" lengthAdjust="spacing">displayMessage()</text>
</svg><!--/DIAGRAM-->
<!-- zoom controls -->
<!--ZC--><div class="a" style="left:992px;top:356px;width:34px;height:28px;border-radius:7px;background:rgba(255,255,255,.75);border:1px solid rgba(225,228,232,.9);box-shadow:0 1px 3px rgba(0,0,0,.1)"></div>
<svg class="a" style="left:1002px;top:363px" width="14" height="14" viewBox="0 0 14 14"><g fill="none" stroke="#4b5563" stroke-width="1.05" stroke-linecap="round"><circle cx="6.5" cy="6.5" r="4.6"/><path d="M10 10 L13 13 M6.5 4.3 V8.7 M4.3 6.5 H8.7"/></g></svg>
<div class="a" style="left:992px;top:392px;width:34px;height:28px;border-radius:7px;background:rgba(255,255,255,.75);border:1px solid rgba(225,228,232,.9);box-shadow:0 1px 3px rgba(0,0,0,.1)"></div>
<svg class="a" style="left:1002px;top:399px" width="14" height="14" viewBox="0 0 14 14"><g fill="none" stroke="#4b5563" stroke-width="1.05" stroke-linecap="round"><circle cx="6.5" cy="6.5" r="4.6"/><path d="M10 10 L13 13 M4.3 6.5 H8.7"/></g></svg>
<div class="a" style="left:992px;top:428px;width:34px;height:28px;border-radius:7px;background:rgba(255,255,255,.75);border:1px solid rgba(225,228,232,.9);box-shadow:0 1px 3px rgba(0,0,0,.1)"></div>
<svg class="a" style="left:1002px;top:435px" width="14" height="14" viewBox="0 0 14 14"><g fill="none" stroke="#4b5563" stroke-width="1.05" stroke-linecap="round"><path d="M3 4.2 A5 5 0 1 1 2.2 7.5"/><path d="M2.6 1.6 V4.6 H5.6"/></g></svg>
<div class="a" style="left:992px;top:464px;width:34px;height:28px;border-radius:7px;background:rgba(255,255,255,.75);border:1px solid rgba(225,228,232,.9);box-shadow:0 1px 3px rgba(0,0,0,.1)"></div>
<svg class="a" style="left:1002px;top:471px" width="14" height="14" viewBox="0 0 14 14"><g fill="none" stroke="#4b5563" stroke-width="1.05" stroke-linecap="round"><path d="M1.8 1.8 L5 5 M1.8 1.8 V4.5 M1.8 1.8 H4.5 M12.2 1.8 L9 5 M12.2 1.8 V4.5 M12.2 1.8 H9.5 M1.8 12.2 L5 9 M1.8 12.2 V9.5 M1.8 12.2 H4.5 M12.2 12.2 L9 9 M12.2 12.2 V9.5 M12.2 12.2 H9.5"/></g></svg>
<div class="a" style="left:992px;top:500px;width:34px;height:28px;border-radius:7px;background:rgba(255,255,255,.75);border:1px solid rgba(225,228,232,.9);box-shadow:0 1px 3px rgba(0,0,0,.1)"></div>
<svg class="a" style="left:1002px;top:507px" width="14" height="14" viewBox="0 0 14 14"><g fill="none" stroke="#4b5563" stroke-width="1.05" stroke-linecap="round"><path d="M1.8 4.5 V2.8 Q1.8 1.8 2.8 1.8 H4.5 M9.5 1.8 H11.2 Q12.2 1.8 12.2 2.8 V4.5 M12.2 9.5 V11.2 Q12.2 12.2 11.2 12.2 H9.5 M4.5 12.2 H2.8 Q1.8 12.2 1.8 11.2 V9.5"/></g></svg><!--/ZC-->
<!-- main scrollbar -->
<svg class="a" style="left:1110px;top:183px" width="11" height="8" viewBox="0 0 11 8"><path d="M1 7.5 L5.5 1.5 L10 7.5Z" fill="#8a8a8a"/></svg>
<div class="a" style="left:1111px;top:197px;width:9px;height:42px;border-radius:4.5px;background:#8a8a8a"></div>
<svg class="a" style="left:1110px;top:658px" width="11" height="8" viewBox="0 0 11 8"><path d="M1 0.5 L5.5 6.5 L10 0.5Z" fill="#8a8a8a"/></svg>
<!-- input area -->
<div class="a" style="left:230px;top:670px;width:893px;height:89px;background:#fff;border-top:1px solid #e5e7eb"></div>
<div class="a" style="left:252px;top:685px;width:803px;height:60px;border-radius:8px;background:#fff;border:1px solid #e0e3e8"></div>
<div class="a" style="left:268px;top:700px;font-size:12.3px;line-height:14px;color:#6b7280;white-space:nowrap">Type your message... (Enter to send, Shift+Enter for new line)</div>
<div class="a" style="left:1065px;top:709px;width:36px;height:36px;border-radius:50%;background:#a5bdfc"></div>
<svg class="a" style="left:1075.6px;top:718.2px" width="16" height="16" viewBox="0 0 16 16"><path d="M14 2 L1.8 7.2 L7 9 L8.8 14.2 Z M14 2 L7 9" fill="none" stroke="#fff" stroke-width="1.2" stroke-linejoin="round"/></svg>
<script>
</script>
<div class="a" style="left:0;top:751px;width:8px;height:8px;background:radial-gradient(circle at 100% 0,transparent 7px,#9a9a9a 7.6px,#d8d8d8 8.5px);z-index:20"></div>
<div class="a" style="left:1115px;top:751px;width:8px;height:8px;background:radial-gradient(circle at 0 0,transparent 7px,#9a9a9a 7.6px,#d8d8d8 8.5px);z-index:20"></div>
</body></html>
